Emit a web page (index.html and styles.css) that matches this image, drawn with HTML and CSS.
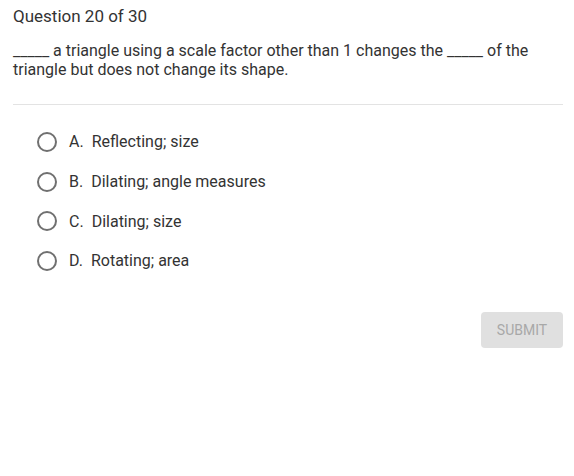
FILE: index.html
```html
<!DOCTYPE html>
<html>
<head>
<meta charset="utf-8">
<link rel="stylesheet" href="styles.css">
</head>
<body>
<div class="page">
  <div class="header">Question 20 of 30</div>
  <div class="prompt">_____ a triangle using a scale factor other than 1 changes the _____ of the triangle but does not change its shape.</div>
  <hr class="divider">
  <ul class="options">
    <li class="option"><span class="radio"></span><span class="letter">A.</span><span>Reflecting; size</span></li>
    <li class="option"><span class="radio"></span><span class="letter">B.</span><span>Dilating; angle measures</span></li>
    <li class="option"><span class="radio"></span><span class="letter">C.</span><span>Dilating; size</span></li>
    <li class="option"><span class="radio"></span><span class="letter">D.</span><span>Rotating; area</span></li>
  </ul>
  <div class="actions"><button class="submit">SUBMIT</button></div>
</div>
</body>
</html>
```
FILE: styles.css
```css
html, body {
  margin: 0;
  padding: 0;
  background: #fff;
}
body {
  font-family: Roboto, "Liberation Sans", sans-serif;
  color: #333;
}
.page {
  padding: 6px 11px 0 13px;
}
.header {
  font-size: 17px;
  line-height: 20px;
}
.prompt {
  margin-top: 15px;
  font-size: 16px;
  line-height: 19px;
  padding-right: 20px;
}
.divider {
  border: none;
  border-top: 1px solid #e3e3e3;
  margin: 25px 0 0 0;
}
.options {
  list-style: none;
  margin: 17px 0 0 0;
  padding: 0 0 0 24px;
}
.option {
  display: flex;
  align-items: center;
  height: 39.7px;
  font-size: 16px;
}
.radio {
  width: 16px;
  height: 16px;
  border: 2px solid #707070;
  border-radius: 50%;
  box-sizing: content-box;
  margin-right: 12px;
  flex: none;
}
.letter {
  margin-right: 8px;
}
.actions {
  display: flex;
  justify-content: flex-end;
  margin-top: 31px;
}
.submit {
  width: 82px;
  height: 36px;
  border: none;
  border-radius: 4px;
  background: #e0e0e0;
  color: #a8a8a8;
  font-family: Roboto, "Liberation Sans", sans-serif;
  font-size: 14px;
  padding: 0;
}
```
